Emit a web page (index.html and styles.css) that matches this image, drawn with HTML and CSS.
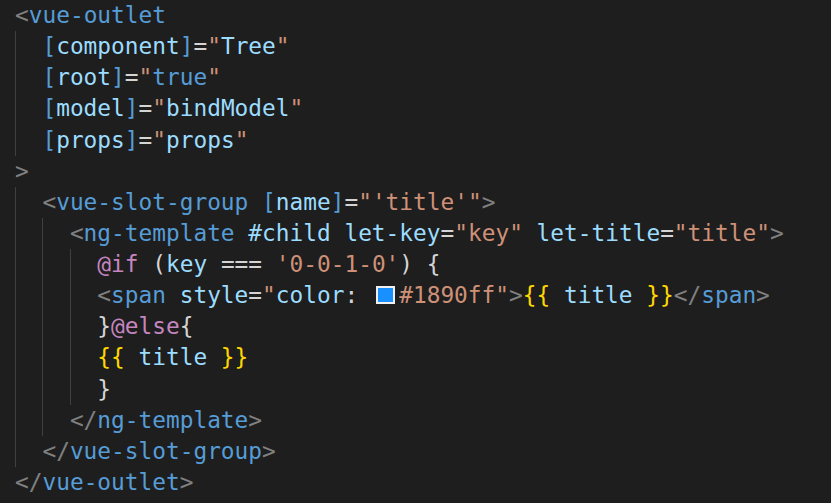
FILE: index.html
```html
<!DOCTYPE html>
<html lang="en">
<head>
<meta charset="utf-8">
<title>vue-outlet snippet</title>
<link rel="stylesheet" href="styles.css">
</head>
<body>
<div class="editor">
  <div class="line"><span class="code"><span class="p">&lt;</span><span class="t">vue-outlet</span></span></div>
  <div class="line"><span class="ind g"></span><span class="code"><span class="b">[</span><span class="a">component</span><span class="b">]</span><span class="o">=</span><span class="s">"</span><span class="a">Tree</span><span class="s">"</span></span></div>
  <div class="line"><span class="ind g"></span><span class="code"><span class="b">[</span><span class="a">root</span><span class="b">]</span><span class="o">=</span><span class="s">"</span><span class="t">true</span><span class="s">"</span></span></div>
  <div class="line"><span class="ind g"></span><span class="code"><span class="b">[</span><span class="a">model</span><span class="b">]</span><span class="o">=</span><span class="s">"</span><span class="a">bindModel</span><span class="s">"</span></span></div>
  <div class="line"><span class="ind g"></span><span class="code"><span class="b">[</span><span class="a">props</span><span class="b">]</span><span class="o">=</span><span class="s">"</span><span class="a">props</span><span class="s">"</span></span></div>
  <div class="line"><span class="code"><span class="p">&gt;</span></span></div>
  <div class="line"><span class="ind g"></span><span class="code"><span class="p">&lt;</span><span class="t">vue-slot-group</span> <span class="b">[</span><span class="a">name</span><span class="b">]</span><span class="o">=</span><span class="s">"'title'"</span><span class="p">&gt;</span></span></div>
  <div class="line"><span class="ind g"></span><span class="ind g"></span><span class="code"><span class="p">&lt;</span><span class="t">ng-template</span> <span class="a">#child</span> <span class="a">let-key</span><span class="o">=</span><span class="s">"key"</span> <span class="a">let-title</span><span class="o">=</span><span class="s">"title"</span><span class="p">&gt;</span></span></div>
  <div class="line"><span class="ind g"></span><span class="ind g"></span><span class="ind g"></span><span class="code"><span class="k">@if</span> <span class="o">(</span><span class="a">key</span> <span class="o">===</span> <span class="s">'0-0-1-0'</span><span class="o">) {</span></span></div>
  <div class="line"><span class="ind g"></span><span class="ind g"></span><span class="ind g"></span><span class="code"><span class="p">&lt;</span><span class="t">span</span> <span class="a">style</span><span class="o">=</span><span class="s">"</span><span class="a">color</span><span class="o">:</span> <span class="swatch"></span><span class="s">#1890ff"</span><span class="p">&gt;</span><span class="y">{{</span> <span class="a">title</span> <span class="y">}}</span><span class="p">&lt;/</span><span class="t">span</span><span class="p">&gt;</span></span></div>
  <div class="line"><span class="ind g"></span><span class="ind g"></span><span class="ind g"></span><span class="code"><span class="o">}</span><span class="k">@else</span><span class="o">{</span></span></div>
  <div class="line"><span class="ind g"></span><span class="ind g"></span><span class="ind g"></span><span class="code"><span class="y">{{</span> <span class="a">title</span> <span class="y">}}</span></span></div>
  <div class="line"><span class="ind g"></span><span class="ind g"></span><span class="ind g"></span><span class="code"><span class="o">}</span></span></div>
  <div class="line"><span class="ind g"></span><span class="ind g"></span><span class="code"><span class="p">&lt;/</span><span class="t">ng-template</span><span class="p">&gt;</span></span></div>
  <div class="line"><span class="ind g"></span><span class="code"><span class="p">&lt;/</span><span class="t">vue-slot-group</span><span class="p">&gt;</span></span></div>
  <div class="line"><span class="code"><span class="p">&lt;/</span><span class="t">vue-outlet</span><span class="p">&gt;</span></span></div>
</div>
</body>
</html>
```
FILE: styles.css
```css
html, body {
  margin: 0;
  padding: 0;
  background: #1e1e1e;
}

.editor {
  width: 831px;
  height: 503px;
  box-sizing: border-box;
  padding: 0 0 0 15px;
  background: #1e1e1e;
  font-family: "DejaVu Sans Mono", "Liberation Mono", monospace;
  font-size: 22.8px;
  color: #d4d4d4;
  overflow: hidden;
}

.line {
  display: flex;
  height: 31.13px;
  line-height: 31.13px;
  white-space: pre;
}

.ind {
  width: 2ch;
  flex: none;
}

.ind.g {
  box-sizing: border-box;
  border-left: 1px solid #404040;
}

.code {
  white-space: pre;
}

.p { color: #808080; }
.t { color: #569cd6; }
.a { color: #9cdcfe; }
.b { color: #569cd6; }
.o { color: #d4d4d4; }
.s { color: #ce9178; }
.k { color: #c586c0; }
.y { color: #ffd700; }

.swatch {
  display: inline-block;
  box-sizing: border-box;
  width: 0.82em;
  height: 0.82em;
  margin: 0 0.18em 0 0.2em;
  border: 0.09em solid #f0f0f0;
  background: #1890ff;
  vertical-align: -0.06em;
}
```
